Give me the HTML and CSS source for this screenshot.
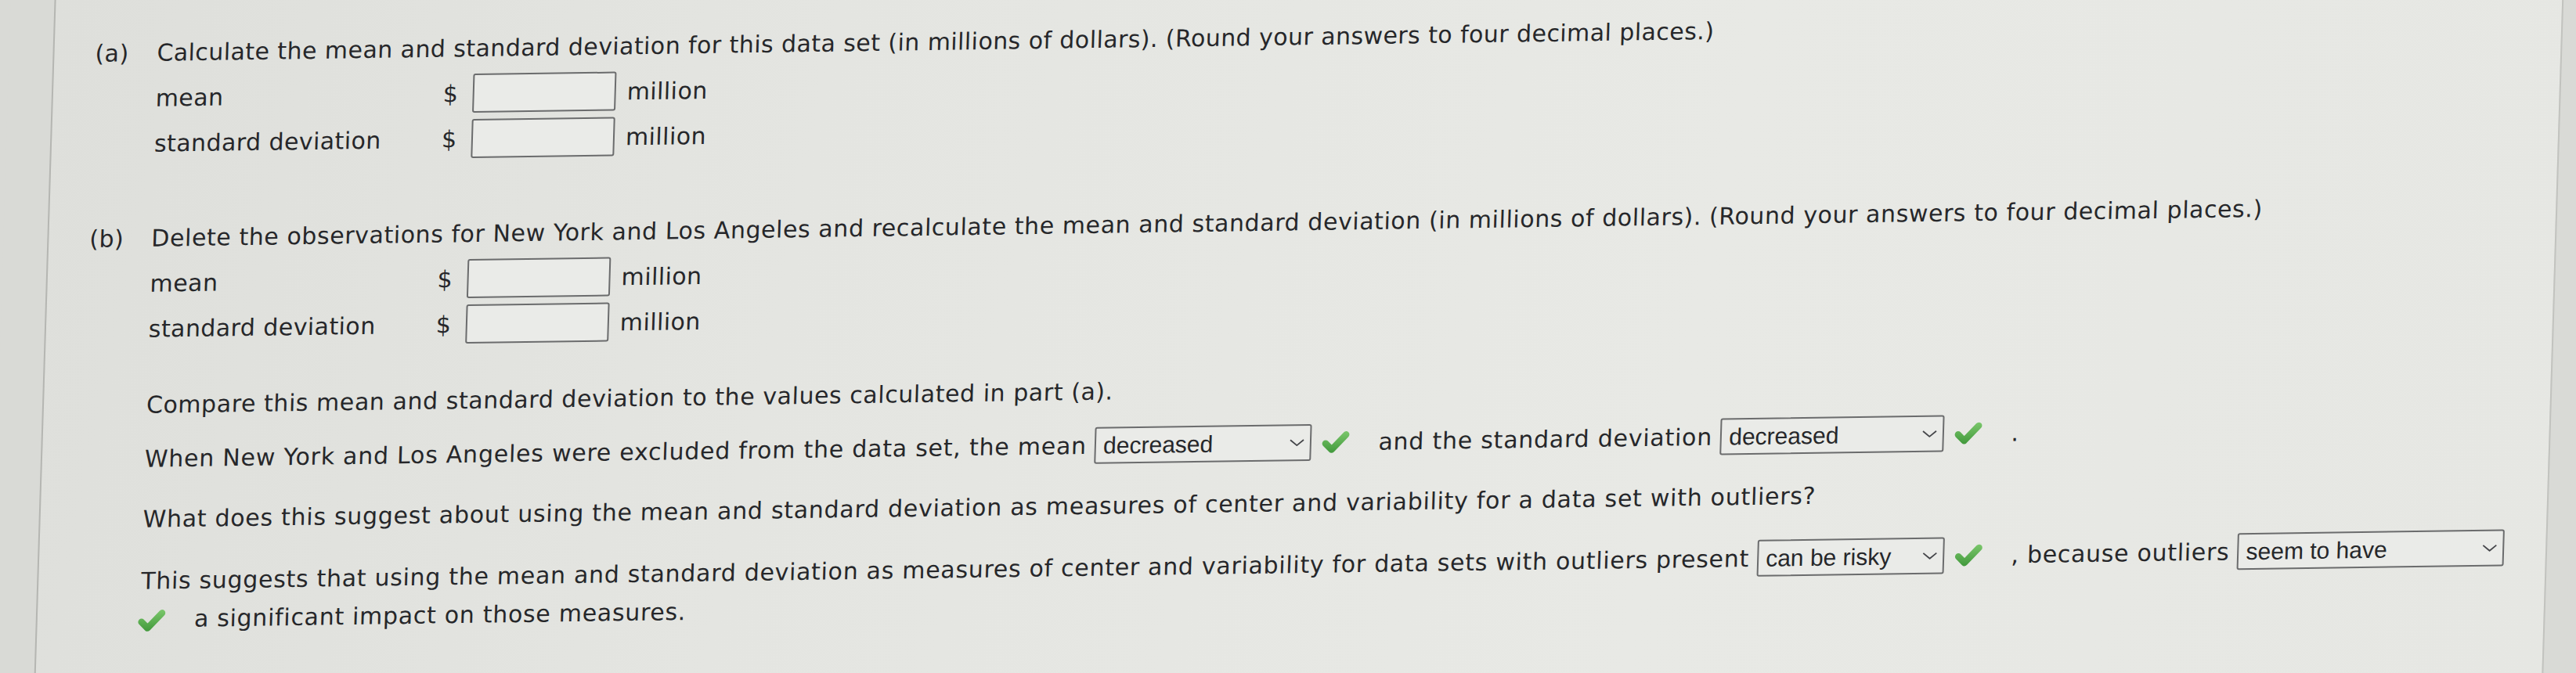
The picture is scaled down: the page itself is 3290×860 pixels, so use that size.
FILE: index.html
```html
<!DOCTYPE html>
<html lang="en">
<head>
  <meta charset="UTF-8" />
  <meta name="viewport" content="width=device-width, initial-scale=1.0" />
  <title>Mean and Standard Deviation</title>
  <link rel="stylesheet" href="styles.css">
</head>
<body>
  <div class="screen">
  <div class="page">
    <div class="panel">

      <div class="part part-a">
        <span class="part-label">(a)</span>
        <div class="part-body">
          <p class="prompt">Calculate the mean and standard deviation for this data set (in millions of dollars). (Round your answers to four decimal places.)</p>
          <div class="answer-row">
            <span class="answer-label">mean</span><span class="dollar">$</span><span class="box"></span><span class="unit">million</span>
          </div>
          <div class="answer-row">
            <span class="answer-label">standard deviation</span><span class="dollar">$</span><span class="box"></span><span class="unit">million</span>
          </div>
        </div>
      </div>

      <div class="part part-b">
        <span class="part-label">(b)</span>
        <div class="part-body">
          <p class="prompt">Delete the observations for New York and Los Angeles and recalculate the mean and standard deviation (in millions of dollars). (Round your answers to four decimal places.)</p>
          <div class="answer-row">
            <span class="answer-label">mean</span><span class="dollar">$</span><span class="box"></span><span class="unit">million</span>
          </div>
          <div class="answer-row">
            <span class="answer-label">standard deviation</span><span class="dollar">$</span><span class="box"></span><span class="unit">million</span>
          </div>

          <p class="line compare">Compare this mean and standard deviation to the values calculated in part (a).</p>

          <p class="line when">When New York and Los Angeles were excluded from the data set, the mean <span class="select"><span class="select-text">decreased</span><svg class="chevron" viewBox="0 0 19 9"><polyline points="1,1 9.5,8 18,1" /></svg></span><svg class="check" viewBox="0 0 36 30"><defs><linearGradient id="checkGreen" x1="0" y1="0" x2="0" y2="30" gradientUnits="userSpaceOnUse"><stop offset="0" stop-color="#7cc86c" /><stop offset="1" stop-color="#3e9639" /></linearGradient></defs><polyline points="5,16 13,24 31,5" /></svg> and the standard deviation <span class="select select-b"><span class="select-text">decreased</span><svg class="chevron" viewBox="0 0 19 9"><polyline points="1,1 9.5,8 18,1" /></svg></span><svg class="check" viewBox="0 0 36 30"><polyline points="5,16 13,24 31,5" /></svg> .</p>

          <p class="line question">What does this suggest about using the mean and standard deviation as measures of center and variability for a data set with outliers?</p>

          <p class="line conclusion">This suggests that using the mean and standard deviation as measures of center and variability for data sets with outliers present <span class="select select-short"><span class="select-text">can be risky</span><svg class="chevron" viewBox="0 0 19 9"><polyline points="1,1 9.5,8 18,1" /></svg></span><svg class="check" viewBox="0 0 36 30"><polyline points="5,16 13,24 31,5" /></svg> , because outliers <span class="select select-wide"><span class="select-text">seem to have</span><svg class="chevron" viewBox="0 0 19 9"><polyline points="1,1 9.5,8 18,1" /></svg></span><svg class="check check-wrap" viewBox="0 0 36 30"><polyline points="5,16 13,24 31,5" /></svg> a significant impact on those measures.</p>
        </div>
      </div>

    </div>
  </div>
  </div>
</body>
</html>
```

FILE: styles.css
```css
body {
  margin: 0;
  background: #d9dad6;
  font-family: "DejaVu Sans", Verdana, sans-serif;
  color: #26272a;
}
.screen {
  height: 860px;
  overflow: hidden;
}
.page {
  width: 3290px;
  height: 920px;
  margin-top: -30px;
  background: #d9dad6;
  transform: matrix(1, -0.014, -0.03, 1, 0, 0);
  transform-origin: 1600px 460px;
}
.panel {
  box-sizing: border-box;
  height: 100%;
  width: 3206px;
  margin-left: 56px;
  padding: 57.6px 30px 0 52px;
  border-left: 2px solid #b5b6b2;
  border-right: 2px solid #c2c3bf;
  background: linear-gradient(100deg, #dedfdb 0%, #e4e5e1 30%, #e8e9e5 65%, #e6e7e3 100%);
}
.part {
  display: flex;
  font-size: 30px;
}
.part-a {
  letter-spacing: 0.43px;
}
.part-b {
  margin-top: 71.5px;
}
.part-b .prompt {
  letter-spacing: 0.57px;
}
.part-label {
  flex: none;
  width: 79px;
  line-height: 40px;
  letter-spacing: 0.5px;
}
.part-body {
  flex: 1;
}
.prompt {
  margin: 0 0 9.5px;
  line-height: 40px;
  white-space: nowrap;
}
.answer-row {
  height: 58px;
  line-height: 58px;
  white-space: nowrap;
  letter-spacing: 0.43px;
}
.answer-label {
  display: inline-block;
  width: 367px;
}
.dollar {
  display: inline-block;
  width: 38px;
}
.box {
  display: inline-block;
  box-sizing: border-box;
  width: 183px;
  height: 50px;
  margin-right: 14px;
  border: 2px solid #6b6c6d;
  border-radius: 3px;
  background: #eaebe8;
  vertical-align: -14px;
}
.line {
  margin: 0;
  line-height: 49px;
}
.compare {
  margin-top: 43px;
  letter-spacing: 0.56px;
}
.when {
  margin-top: 20px;
  letter-spacing: 0.76px;
}
.question {
  margin-top: 28px;
  letter-spacing: 0.72px;
}
.conclusion {
  margin-top: 30px;
  letter-spacing: 0.7px;
}
.select {
  display: inline-flex;
  align-items: center;
  box-sizing: border-box;
  width: 277px;
  height: 47px;
  padding: 0 7px 0 9px;
  border: 2px solid #6b6c6d;
  border-radius: 3px;
  background: #eaebe8;
  font-family: "Liberation Sans", Arial, sans-serif;
  font-size: 30px;
  letter-spacing: 0;
}
.select-b {
  width: 286px;
}
.select-short {
  width: 239px;
}
.select-wide {
  width: 341px;
}
.select-text {
  line-height: 43px;
}
.chevron {
  width: 19px;
  height: 9px;
  margin-left: auto;
}
.chevron polyline {
  fill: none;
  stroke: #45464a;
  stroke-width: 1.8;
}
.check {
  width: 36px;
  height: 30px;
  margin: 0 26px 0 13px;
  vertical-align: -5px;
}
.check polyline {
  fill: none;
  stroke: url(#checkGreen);
  stroke-width: 8.5;
  stroke-linecap: round;
  stroke-linejoin: round;
}
.check-wrap {
  margin-left: -3px;
  vertical-align: -7px;
}
```
